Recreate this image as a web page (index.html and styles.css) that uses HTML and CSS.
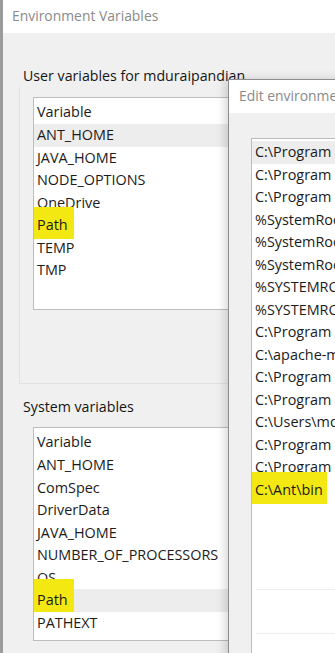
FILE: index.html
```html
<!DOCTYPE html>
<html lang="en">
<head>
<meta charset="utf-8">
<title>Environment Variables</title>
<link rel="stylesheet" href="styles.css">
</head>
<body>
<div class="env">
  <div class="titlebar">Environment Variables</div>
  <div class="env-body">
    <div class="label label-user">User variables for mduraipandian</div>
    <div class="section">
      <div class="list list-user">
        <div class="row head">Variable</div>
        <div class="row sel">ANT_HOME</div>
        <div class="row">JAVA_HOME</div>
        <div class="row">NODE_OPTIONS</div>
        <div class="row">OneDrive</div>
        <div class="row"><span class="mark mark-user">Path</span></div>
        <div class="row">TEMP</div>
        <div class="row">TMP</div>
      </div>
    </div>
    <div class="label label-sys">System variables</div>
    <div class="list list-sys">
      <div class="row head">Variable</div>
      <div class="row">ANT_HOME</div>
      <div class="row">ComSpec</div>
      <div class="row">DriverData</div>
      <div class="row">JAVA_HOME</div>
      <div class="row">NUMBER_OF_PROCESSORS</div>
      <div class="row">OS</div>
      <div class="row sel"><span class="mark mark-sys">Path</span></div>
      <div class="row">PATHEXT</div>
    </div>
  </div>
</div>

<div class="edit">
  <div class="titlebar edit-title">Edit environment variable</div>
  <div class="edit-body">
    <div class="list list-path">
      <div class="row sel">C:\Program Files\Java\jdk-17\bin</div>
      <div class="row">C:\Program Files (x86)\Common Files\Oracle\Java\javapath</div>
      <div class="row">C:\Program Files (x86)\Intel\iCLS Client\</div>
      <div class="row">%SystemRoot%\system32</div>
      <div class="row">%SystemRoot%</div>
      <div class="row">%SystemRoot%\System32\Wbem</div>
      <div class="row">%SYSTEMROOT%\System32\WindowsPowerShell\v1.0\</div>
      <div class="row">%SYSTEMROOT%\System32\OpenSSH\</div>
      <div class="row">C:\Program Files\Git\cmd</div>
      <div class="row">C:\apache-maven\bin</div>
      <div class="row">C:\Program Files\nodejs\</div>
      <div class="row">C:\Program Files\Docker\Docker\resources\bin</div>
      <div class="row">C:\Users\mduraipandian\AppData\Local\Microsoft\WindowsApps</div>
      <div class="row">C:\Program Files\dotnet\</div>
      <div class="row">C:\Program Files\Python310\</div>
      <div class="row"><span class="mark mark-path">C:\Ant\bin</span></div>
      <div class="ghost"></div>
    </div>
  </div>
</div>
</body>
</html>
```
FILE: styles.css
```css
html, body {
  margin: 0;
  padding: 0;
}
body {
  width: 335px;
  height: 653px;
  overflow: hidden;
  position: relative;
  background: #f0f0f0;
  font-family: "Open Sans", "Noto Sans", "Liberation Sans", sans-serif;
  font-size: 14.4px;
  color: #1b1b1b;
}
.env {
  height: 653px;
  border-left: 3px solid #9b9b9b;
  background: #f0f0f0;
  overflow: hidden;
}
.titlebar {
  height: 33px;
  line-height: 32px;
  background: #ffffff;
  color: #8a8a8a;
  font-size: 13.9px;
  padding-left: 9px;
  white-space: nowrap;
}
.env-body {
  display: flex;
  flex-direction: column;
  align-items: flex-start;
}
.label {
  height: 22px;
  line-height: 22px;
  font-size: 14.2px;
  padding-left: 20px;
  white-space: nowrap;
  color: #151515;
}
.label-user {
  margin-top: 32px;
}
.label-sys {
  margin-top: 12px;
}
.section {
  margin-left: 16px;
  width: 400px;
  padding: 10px 0 73px 13px;
  border-left: 1px solid #e2e2e2;
  border-bottom: 1px solid #e2e2e2;
}
.list {
  box-sizing: border-box;
  background: #ffffff;
  border: 1px solid #bdbdbd;
  padding-top: 2px;
  overflow: hidden;
}
.list-user {
  width: 260px;
  height: 213px;
}
.list-sys {
  margin-top: 9px;
  margin-left: 30px;
  width: 260px;
  height: 214px;
}
.row {
  height: 22.5px;
  line-height: 22.5px;
  padding-left: 3px;
  white-space: nowrap;
}
.row.head {
  height: 24px;
  line-height: 24px;
}
.row.sel {
  background: #ededed;
}
.mark {
  display: inline-block;
  position: relative;
  z-index: 0;
}
.mark::before {
  content: "";
  position: absolute;
  z-index: -1;
  background: #f4e812;
}
.mark-user::before {
  top: -7px;
  bottom: -2px;
  left: -5px;
  right: -6px;
}
.mark-sys::before {
  top: -10px;
  bottom: 0;
  left: -10px;
  right: -6px;
}
.mark-path::before {
  top: -7px;
  bottom: -3px;
  left: -14px;
  right: -4px;
}
.edit {
  position: absolute;
  left: 228px;
  top: 79px;
  width: 300px;
  height: 600px;
  background: #f0f0f0;
  border-left: 1px solid #8c8c8c;
  border-top: 1px solid #8c8c8c;
  box-shadow: -3px 0 9px rgba(0, 0, 0, 0.16);
}
.edit-title {
  height: 33px;
  padding-left: 10px;
}
.edit-body {
  padding: 25px 0 0 22px;
}
.list-path {
  height: 560px;
  border-right: none;
  border-bottom: none;
}
.ghost {
  margin-top: 88px;
  margin-left: 4px;
  height: 43px;
  border-top: 1px solid #ececec;
  border-bottom: 1px solid #ececec;
}
```
